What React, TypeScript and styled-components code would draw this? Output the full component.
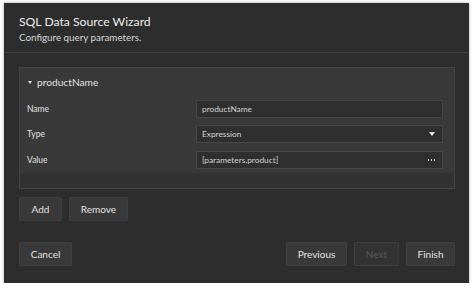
import React from "react";
import styled, { createGlobalStyle } from "styled-components";

const GlobalStyle = createGlobalStyle`
  html, body {
    margin: 0;
    padding: 0;
    background: #ffffff;
  }
  body {
    font-family: Lato, "Noto Sans", sans-serif;
  }
`;

const Wizard = styled.div`
  margin: 3px 0 0 4px;
  width: 465px;
  height: 280px;
  background: #2d2d2d;
  box-shadow: 0 0 3px rgba(0, 0, 0, 0.35);
  display: flex;
  flex-direction: column;
  color: #e6e6e6;
`;

const Header = styled.div`
  height: 50px;
  padding: 11px 15px 0;
  box-sizing: border-box;
  border-bottom: 1px solid #3f3f3f;
`;

const Title = styled.div`
  font-size: 12.2px;
  line-height: 16px;
  color: #ececec;
`;

const Subtitle = styled.div`
  font-size: 9.8px;
  line-height: 14px;
  color: #d8d8d8;
`;

const Body = styled.div`
  flex: 1;
  padding: 14px 14px 0 15px;
  display: flex;
  flex-direction: column;
`;

const Group = styled.div`
  border: 1px solid #454545;
  background: #323232;
  height: 122px;
  box-sizing: border-box;
`;

const GroupContent = styled.div`
  background: #393939;
`;

const GroupHeader = styled.div`
  height: 28px;
  display: flex;
  align-items: center;
  padding-left: 8px;
  font-size: 10.2px;
  color: #e2e2e2;
  gap: 5px;
`;

const Caret = styled.span`
  width: 0;
  height: 0;
  border-left: 2.5px solid transparent;
  border-right: 2.5px solid transparent;
  border-top: 3px solid #e0e0e0;
`;

const Row = styled.div`
  display: flex;
  align-items: center;
  height: 25.5px;
  padding: 0 11px 0 7px;
`;

const Label = styled.div`
  width: 169px;
  font-size: 8.5px;
  color: #e0e0e0;
`;

const Field = styled.div`
  flex: 1;
  height: 18px;
  box-sizing: border-box;
  border: 1px solid #474747;
  background: #2f2f2f;
  display: flex;
  align-items: center;
  justify-content: space-between;
  padding: 0 6px 0 5px;
  font-size: 8.3px;
  color: #d4d4d4;
`;

const DropArrow = styled.span`
  width: 0;
  height: 0;
  border-left: 3.5px solid transparent;
  border-right: 3.5px solid transparent;
  border-top: 4px solid #e6e6e6;
  margin-right: 1px;
`;

const Dots = styled.span`
  display: flex;
  gap: 1.5px;
  margin-right: 1px;
`;

const Dot = styled.span`
  width: 1.5px;
  height: 1.5px;
  background: #dcdcdc;
`;

const ButtonRow = styled.div<{ $top: number }>`
  display: flex;
  gap: 7px;
  margin-top: ${(p) => p.$top}px;
`;

const Spacer = styled.div`
  flex: 1;
`;

const Button = styled.button<{ $w: number; $disabled?: boolean }>`
  width: ${(p) => p.$w}px;
  height: 24px;
  border: 1px solid #3f3f3f;
  border-radius: 1px;
  color: ${(p) => (p.$disabled ? "#5a5a5a" : "#e2e2e2")};
  background: ${(p) => (p.$disabled ? "#333333" : "#393939")};
  font-family: Lato, "Noto Sans", sans-serif;
  font-size: 10px;
  padding: 0;
  cursor: pointer;
`;

const App: React.FC = () => (
  <>
    <GlobalStyle />
    <Wizard>
      <Header>
        <Title>SQL Data Source Wizard</Title>
        <Subtitle>Configure query parameters.</Subtitle>
      </Header>
      <Body>
        <Group>
          <GroupContent>
            <GroupHeader>
              <Caret />
              productName
            </GroupHeader>
            <Row>
              <Label>Name</Label>
              <Field>productName</Field>
            </Row>
            <Row>
              <Label>Type</Label>
              <Field>
                Expression
                <DropArrow />
              </Field>
            </Row>
            <Row>
              <Label>Value</Label>
              <Field>
                [parameters.product]
                <Dots>
                  <Dot />
                  <Dot />
                  <Dot />
                </Dots>
              </Field>
            </Row>
          </GroupContent>
        </Group>
        <ButtonRow $top={8}>
          <Button $w={43}>Add</Button>
          <Button $w={59}>Remove</Button>
        </ButtonRow>
        <ButtonRow $top={21}>
          <Button $w={53}>Cancel</Button>
          <Spacer />
          <Button $w={61}>Previous</Button>
          <Button $w={45} $disabled>
            Next
          </Button>
          <Button $w={49}>Finish</Button>
        </ButtonRow>
      </Body>
    </Wizard>
  </>
);

export default App;
